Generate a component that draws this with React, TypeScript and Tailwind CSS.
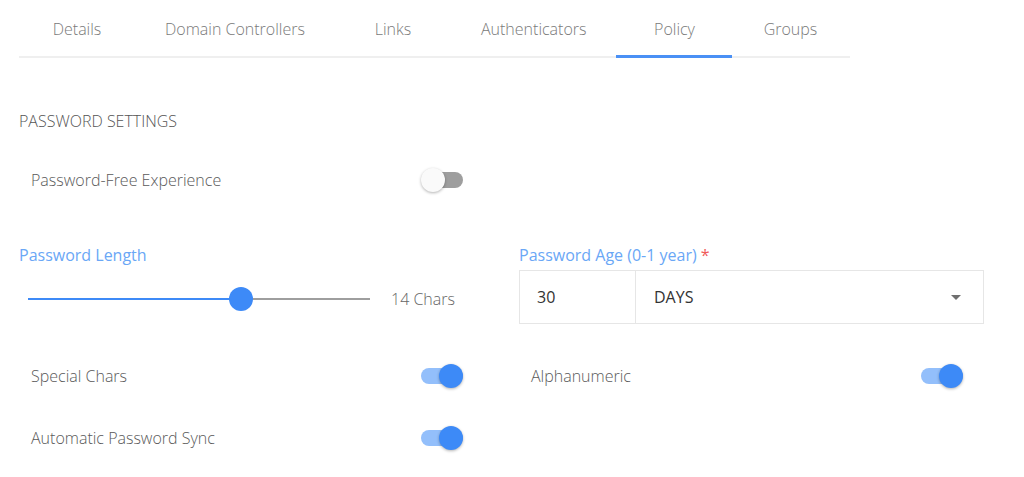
import React from "react";

const tabs = ["Details", "Domain Controllers", "Links", "Authenticators", "Policy", "Groups"];

function Toggle({ on }: { on: boolean }) {
  return (
    <div className="relative h-[24px] w-[42px] shrink-0">
      <div
        className={
          "absolute right-0 top-[4px] h-[16px] rounded-full " +
          (on ? "left-0 bg-[#93bffb]" : "left-[8px] bg-[#9e9e9e]")
        }
      />
      <div
        className={
          "absolute top-0 h-[24px] w-[24px] rounded-full shadow-[0_1px_3px_rgba(0,0,0,0.3)] " +
          (on ? "right-0 bg-[#3d8af7]" : "left-0 bg-[#fafafa]")
        }
      />
    </div>
  );
}

function ToggleRow({ label, on }: { label: string; on: boolean }) {
  return (
    <div className="flex h-[24px] items-center justify-between pl-[12px] pr-[21px]">
      <span className="text-[16px] leading-[20px] text-[#5a5a5a]">{label}</span>
      <Toggle on={on} />
    </div>
  );
}

export default function App() {
  return (
    <div
      className="h-[477px] w-[1024px] bg-white font-light"
      style={{ fontFamily: '"Open Sans", "Noto Sans", sans-serif' }}
    >
      <div className="ml-[19px] flex w-[831px] border-b-2 border-[#efefef]">
        {tabs.map((t) => (
          <div
            key={t}
            className={
              "relative -mb-[2px] flex h-[58px] min-w-[116px] items-center justify-center px-[30px] text-[16px] leading-[20px] text-[#7a7a7a] " +
              (t === "Policy" ? "border-b-[3px] border-[#4a90f5] pt-[3px]" : "")
            }
          >
            {t}
          </div>
        ))}
      </div>

      <div className="ml-[19px] mt-[53px] text-[16px] leading-[20px] text-[#555]">PASSWORD SETTINGS</div>

      <div className="ml-[19px] mt-[37px] grid w-[965px] grid-cols-[465px_465px] gap-x-[35px]">
        <ToggleRow label="Password-Free Experience" on={false} />
        <div />

        <div className="mt-[53px]">
          <div className="text-[16px] font-normal leading-[20px] text-[#6aa7f6]">Password Length</div>
          <div className="mt-[22px] flex h-[24px] items-center pl-[9px]">
            <div className="relative h-[24px] w-[342px]">
              <div className="absolute left-0 top-[11px] h-[2px] w-[213px] bg-[#3d8af7]" />
              <div className="absolute left-[213px] right-0 top-[11px] h-[2px] bg-[#9e9e9e]" />
              <div className="absolute left-[201px] top-0 h-[24px] w-[24px] rounded-full bg-[#3d8af7]" />
            </div>
            <span className="ml-[21px] text-[16px] leading-[20px] text-[#666]">14 Chars</span>
          </div>
        </div>
        <div className="mt-[53px]">
          <div className="text-[16px] font-normal leading-[20px] text-[#6aa7f6]">
            Password Age (0-1 year) <span className="text-[#f05a5a]">*</span>
          </div>
          <div className="mt-[5px] flex h-[54px] border border-[#e6e6e6]">
            <div className="flex w-[116px] items-center border-r border-[#e6e6e6] pl-[17px] text-[16px] font-normal text-[#333]">
              30
            </div>
            <div className="flex flex-1 items-center justify-between pl-[18px] pr-[22px] text-[16px] font-normal text-[#333]">
              <span>DAYS</span>
              <svg width="10" height="5" viewBox="0 0 10 5">
                <path d="M0 0 L10 0 L5 5 Z" fill="#6f6f6f" />
              </svg>
            </div>
          </div>
        </div>

        <div className="mt-[40px]">
          <ToggleRow label="Special Chars" on={true} />
        </div>
        <div className="mt-[40px]">
          <ToggleRow label="Alphanumeric" on={true} />
        </div>

        <div className="mt-[38px]">
          <ToggleRow label="Automatic Password Sync" on={true} />
        </div>
        <div />
      </div>
    </div>
  );
}
